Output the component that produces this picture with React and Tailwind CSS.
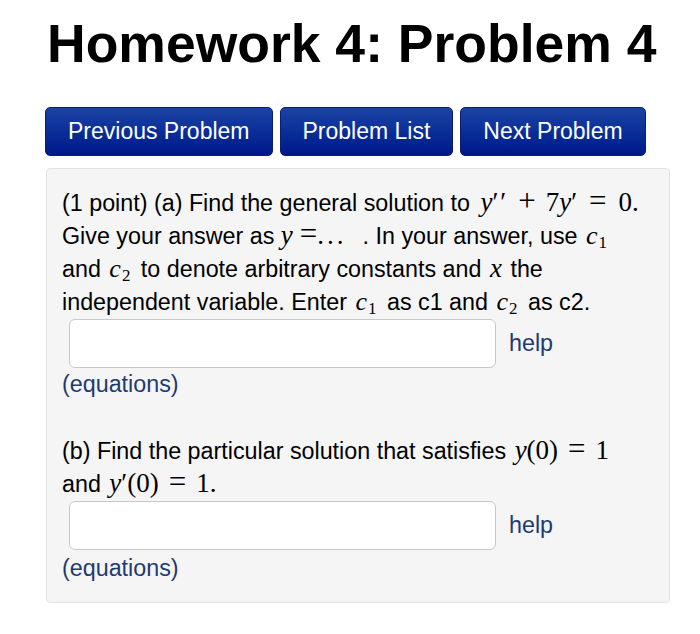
import React from 'react';

// math pieces rendered in a serif face, MathJax-like spacing
const M = ({ children, className = "" }) => (
    <span className={"font-['Liberation_Serif'] text-[27px] leading-[0] " + className}>{children}</span>
);
const Op = ({ children, className = "" }) => (
    <span className={"font-['Liberation_Serif'] text-[31px] leading-[0] " + className}>{children}</span>
);
const V = ({ children, className = "" }) => (
    <i className={"font-['Liberation_Serif'] text-[27px] leading-[0] " + className}>{children}</i>
);
const C = ({ n }) => (
    <span className="font-['Liberation_Serif'] text-[26px] leading-[0] ml-[2px] mr-[4px]">
        <i>c</i><sub className="text-[17px] not-italic ml-[1px]">{n}</sub>
    </span>
);

const AnswerRow = () => (
    <div className="flex items-center ml-[7px]">
        <div className="w-[427px] h-[49px] bg-white border border-[#c9c9c9] rounded-[6px]"></div>
        <span className="ml-[13px] text-[#1f3a72]">help</span>
    </div>
);

export default function App() {
    const buttons = ["Previous Problem", "Problem List", "Next Problem"];
    return (
        <div className="w-[700px] h-[634px] bg-white font-['Liberation_Sans',Arial,sans-serif] text-black">
            <h1 className="pl-[47px] pt-[17px] text-[53.5px] font-bold leading-none">Homework 4: Problem 4</h1>

            {/* Nav buttons */}
            <div className="flex gap-[7px] pl-[45px] mt-[36px]">
                {buttons.map((b) => (
                    <div key={b} className="h-[49px] px-[22px] flex items-center rounded-[5px] border border-[#0b1f6e] bg-linear-to-b from-[#1c42a4] to-[#00168a] text-white text-[23px]">
                        {b}
                    </div>
                ))}
            </div>

            {/* Problem panel */}
            <div className="ml-[46px] mt-[12px] w-[624px] bg-[#f5f5f5] border border-[#e3e3e3] rounded-[4px] pl-[15px] pr-[10px] pt-[18px] pb-[17px] text-[23.3px] leading-[33px]">
                <div className="whitespace-nowrap">
                    (1 point) (a) Find the general solution to <V className="ml-[4px]">y</V><M className="tracking-[2px]">′′</M><Op className="mx-[10px]">+</Op><M>7</M><V>y</V><M>′</M><Op className="mx-[12px]">=</Op><M>0.</M><br />
                    Give your answer as <V>y</V><Op className="ml-[7px]">=</Op><M className="tracking-[3px]">...</M><span className="ml-[16px]">. In your answer, use</span> <C n="1" /><br />
                    and <C n="2" /> to denote arbitrary constants and <V className="mx-[2px]">x</V> the<br />
                    independent variable. Enter <C n="1" /> as c1 and <C n="2" /> as c2.
                </div>
                <AnswerRow />
                <div className="text-[#1f3a72]">(equations)</div>

                <div className="mt-[34px] whitespace-nowrap">
                    (b) Find the particular solution that satisfies <V className="ml-[2px]">y</V><M>(0)</M><Op className="mx-[10px]">=</Op><M>1</M><br />
                    and <V className="ml-[2px]">y</V><M>′(0)</M><Op className="mx-[10px]">=</Op><M>1.</M>
                </div>
                <AnswerRow />
                <div className="text-[#1f3a72] mt-[2px]">(equations)</div>
            </div>
        </div>
    );
}
